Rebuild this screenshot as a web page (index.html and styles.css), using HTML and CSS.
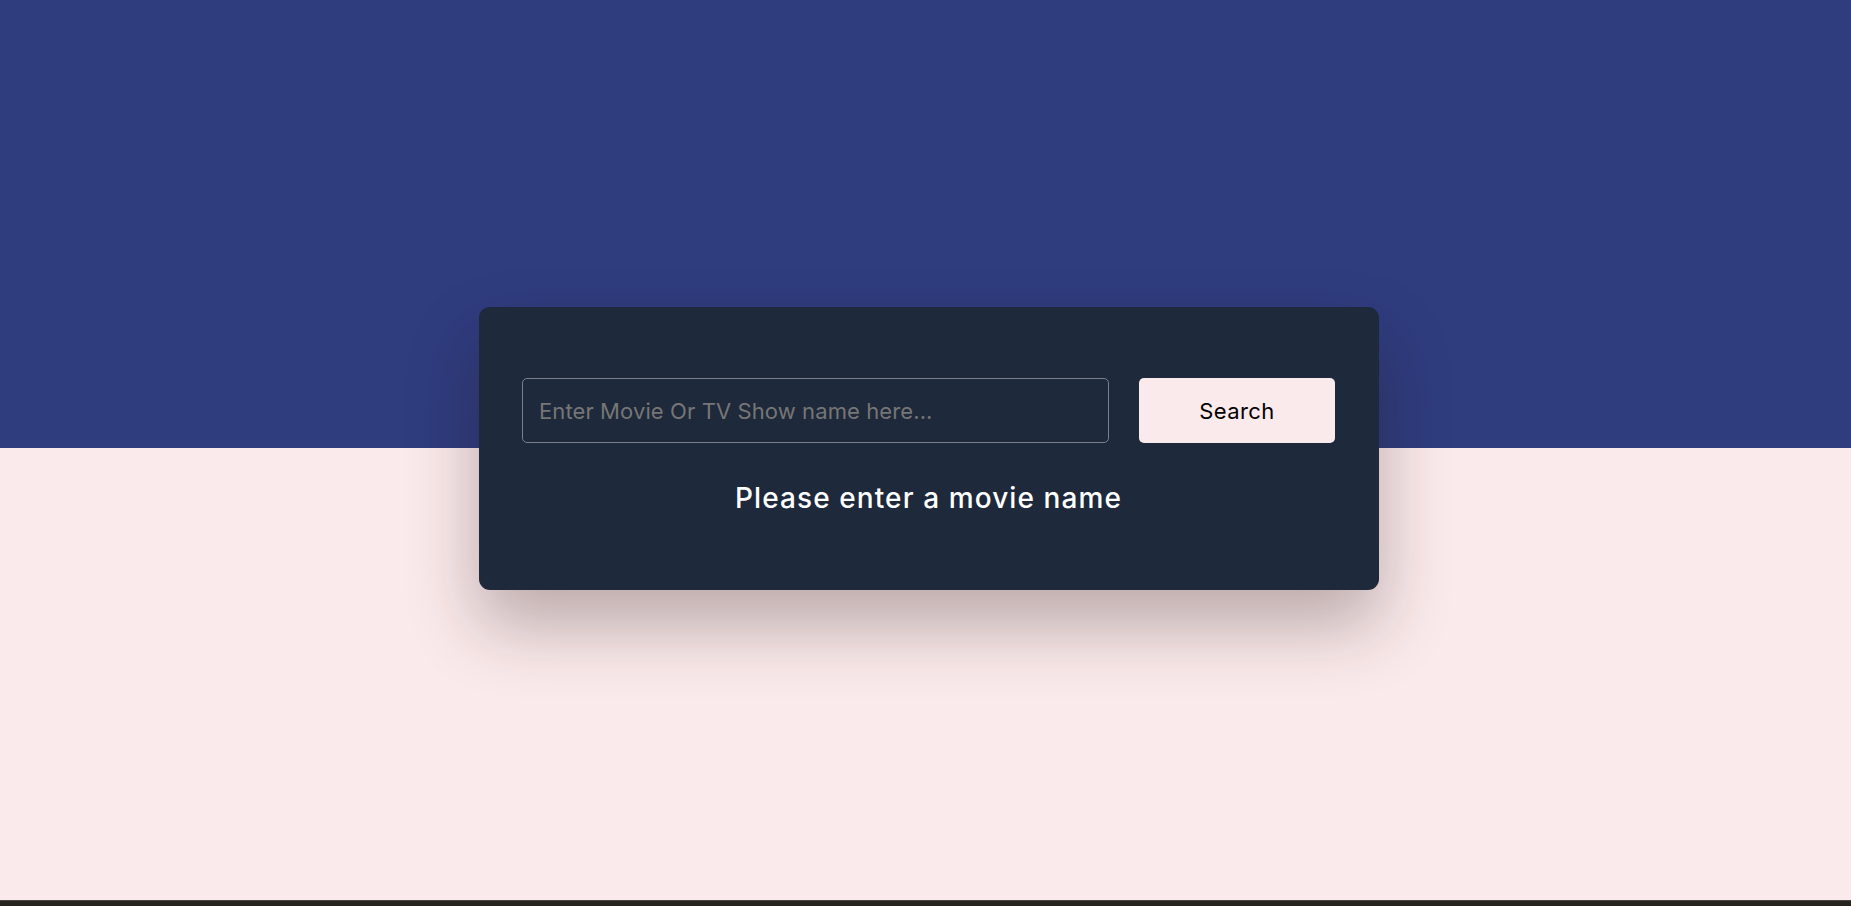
FILE: index.html
```html
<!DOCTYPE html>
<html lang="en">
<head>
<meta charset="utf-8">
<title>Movie Search</title>
<link rel="stylesheet" href="styles.css">
</head>
<body>
<main class="page">
  <section class="card">
    <div class="search-row">
      <input class="search-input" type="text" placeholder="Enter Movie Or TV Show name here...">
      <button class="search-btn" type="button">Search</button>
    </div>
    <h3 class="message">Please enter a movie name</h3>
  </section>
</main>
<div class="strip"></div>
</body>
</html>
```
FILE: styles.css
```css
* { box-sizing: border-box; }
html, body { margin: 0; padding: 0; }
body {
  font-family: "Inter", "Noto Sans", sans-serif;
  background: #fbeaeb;
  overflow: hidden;
}
.page {
  height: 900px;
  background: linear-gradient(to bottom, #2f3c7e 0, #2f3c7e 448px, #fbeaeb 448px, #fbeaeb 100%);
  display: flex;
  justify-content: center;
  align-items: flex-start;
  padding: 307px 0 0 7px;
}
.card {
  width: 900px;
  height: 283px;
  background: #1e293b;
  border-radius: 11px;
  padding: 71px 44px 0 43px;
  box-shadow: 0 35px 70px rgba(40, 20, 20, 0.3);
}
.search-row {
  display: flex;
  gap: 30px;
}
.search-input {
  width: 587px;
  height: 65px;
  border: 1px solid #7b808a;
  border-radius: 5px;
  background: transparent;
  padding: 0 16px;
  font-family: "Inter", "Noto Sans", sans-serif;
  font-size: 22px;
  letter-spacing: 0.1px;
  color: #ffffff;
  outline: none;
}
.search-input::placeholder { color: #767676; }
.search-btn {
  width: 196px;
  height: 65px;
  border: none;
  border-radius: 5px;
  background: #fbeaeb;
  color: #000;
  font-family: "Inter", "Noto Sans", sans-serif;
  font-size: 22px;
  letter-spacing: 0.4px;
  cursor: pointer;
}
.message {
  margin: 39px 0 0;
  text-align: center;
  color: #ffffff;
  font-size: 28px;
  font-weight: 500;
  letter-spacing: 1.1px;
  line-height: 32px;
}
.strip {
  height: 6px;
  background: #26221e;
  border-top: 1px solid #4a4643;
}
```
